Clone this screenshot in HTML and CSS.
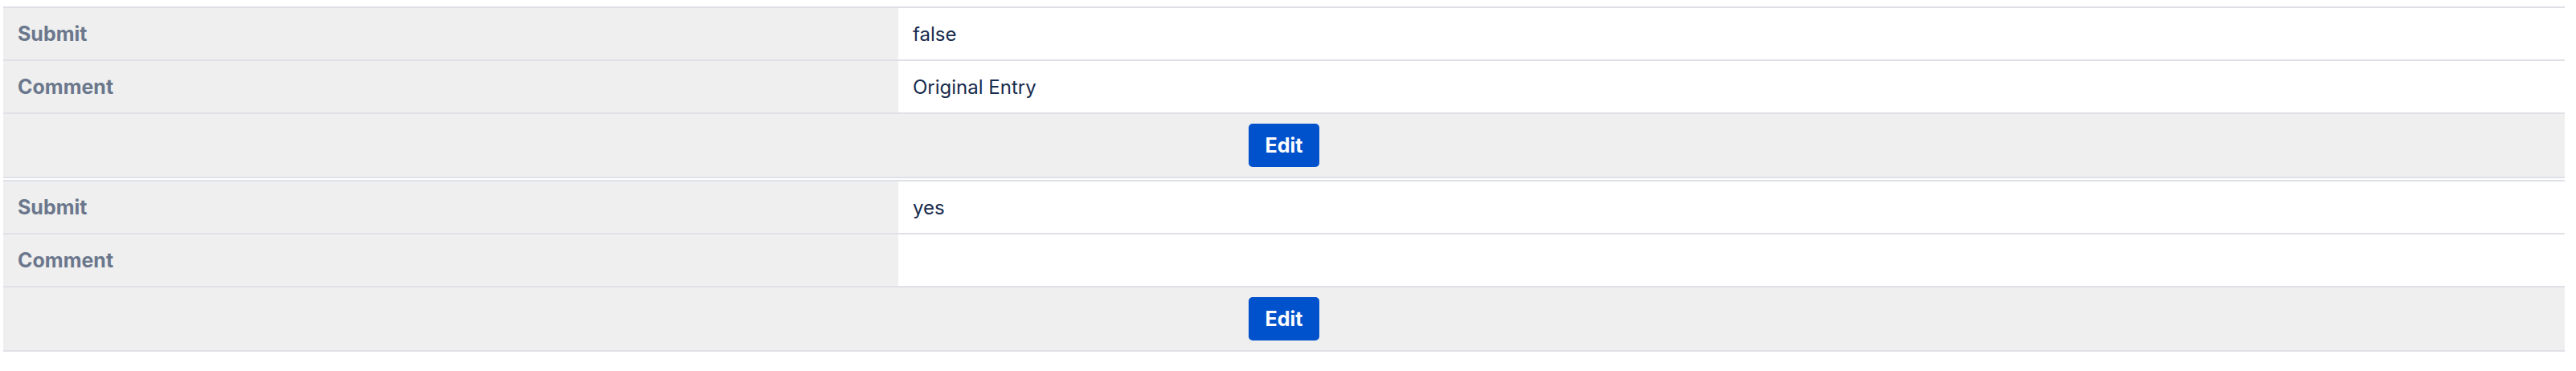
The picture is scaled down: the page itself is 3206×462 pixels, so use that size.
FILE: index.html
```html
<!DOCTYPE html>
<html>
<head>
<meta charset="utf-8">
<link rel="stylesheet" href="styles.css">
</head>
<body>
<div class="entry">
  <div class="field">
    <div class="label">Submit</div>
    <div class="value">false</div>
  </div>
  <div class="field">
    <div class="label">Comment</div>
    <div class="value">Original Entry</div>
  </div>
  <div class="actions"><button class="btn">Edit</button></div>
</div>
<div class="entry">
  <div class="field">
    <div class="label">Submit</div>
    <div class="value">yes</div>
  </div>
  <div class="field">
    <div class="label">Comment</div>
    <div class="value"></div>
  </div>
  <div class="actions"><button class="btn">Edit</button></div>
</div>
</body>
</html>
```

FILE: styles.css
```css
html, body {
  background: #ffffff;
}
body {
  margin: 8px 14px 0 4px;
  font-family: Inter, "Liberation Sans", sans-serif;
}
.entry {
  border-top: 2px solid #dfe1e6;
  border-bottom: 2px solid #dfe1e6;
  margin-bottom: 2px;
  background: #efefef;
}
.field {
  display: grid;
  grid-template-columns: 1114px 1fr;
  border-bottom: 2px solid #dfe1e6;
}
.label {
  height: 64px;
  display: flex;
  align-items: center;
  padding: 0 18px;
  font-size: 25px;
  font-weight: 700;
  color: #6b778c;
  background: #efefef;
}
.value {
  display: flex;
  align-items: center;
  padding: 0 18px;
  font-size: 24px;
  color: #172b4d;
  background: #ffffff;
}
.actions {
  padding: 12px 0;
  display: flex;
  justify-content: center;
}
.btn {
  width: 88px;
  height: 54px;
  border: none;
  border-radius: 5px;
  background: #0052cc;
  color: #ffffff;
  font-family: Inter, "Liberation Sans", sans-serif;
  font-size: 25px;
  font-weight: 700;
  padding: 0;
}
```
